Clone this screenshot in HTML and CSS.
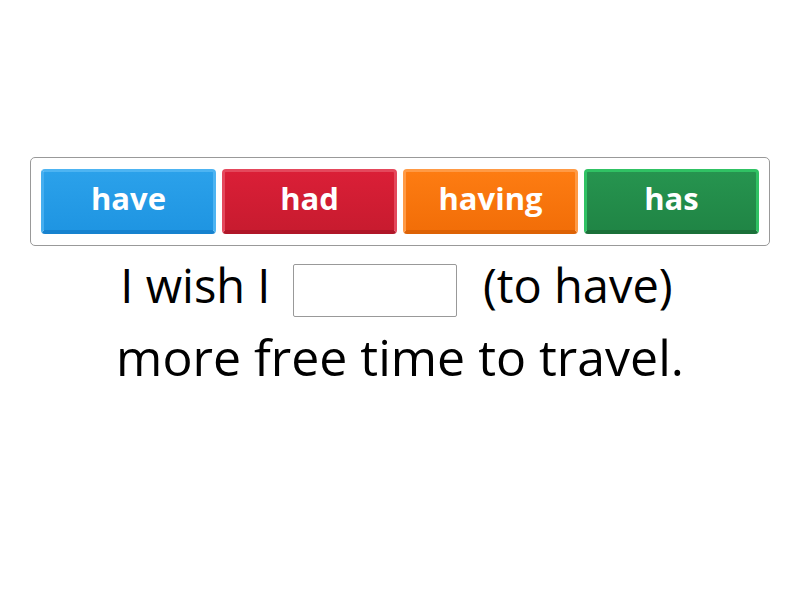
FILE: index.html
```html
<!DOCTYPE html>
<html>
<head>
<meta charset="utf-8">
<link rel="stylesheet" href="styles.css">
</head>
<body>
<div class="page">
  <div class="bank">
    <div class="tile blue">have</div>
    <div class="tile red">had</div>
    <div class="tile orange">having</div>
    <div class="tile green">has</div>
  </div>
  <p class="sentence"><span class="first">I wish I <span class="blank"></span> (to have)</span> more free time to travel.</p>
</div>
</body>
</html>
```
FILE: styles.css
```css
html, body {
  margin: 0;
  padding: 0;
  background: #fff;
}
.page {
  width: 800px;
  height: 600px;
  padding-top: 157px;
  box-sizing: border-box;
  font-family: "Open Sans", "DejaVu Sans", sans-serif;
}
.bank {
  margin: 0 30px;
  height: 89px;
  box-sizing: border-box;
  border: 1px solid #999;
  border-radius: 5px;
  padding: 11px 10px 0 10px;
  display: flex;
  gap: 6px;
}
.tile {
  width: 175px;
  height: 65px;
  box-sizing: border-box;
  border-radius: 4px;
  border: 3px solid;
  border-bottom-width: 4px;
  color: #fff;
  font-weight: 700;
  font-size: 31px;
  display: flex;
  align-items: center;
  justify-content: center;
  padding-bottom: 7px;
}
.blue {
  background: linear-gradient(#2ba1ea, #1f95e2);
  border-color: #4db4f2 #4db4f2 #1682cf #45aeef;
}
.red {
  background: linear-gradient(#da1f37, #c81b2f);
  border-color: #e4485c #e4485c #b01628 #e4485c;
}
.orange {
  background: linear-gradient(#fd7c12, #f26e08);
  border-color: #ff9a45 #ff9a45 #dd6205 #ff9a45;
}
.green {
  background: linear-gradient(#26944f, #208545);
  border-color: #30c264 #30c264 #1a7039 #30c264;
}
.sentence {
  margin: 2px auto 0;
  width: 600px;
  text-align: center;
  font-size: 50px;
  line-height: 72px;
  color: #000;
}
.first {
  font-size: 47px;
  margin-right: 7px;
}
.blank {
  display: inline-block;
  width: 164px;
  height: 53px;
  box-sizing: border-box;
  border: 1px solid #999;
  border-radius: 2px;
  vertical-align: middle;
  margin: 0 14px 0 10px;
}
```
